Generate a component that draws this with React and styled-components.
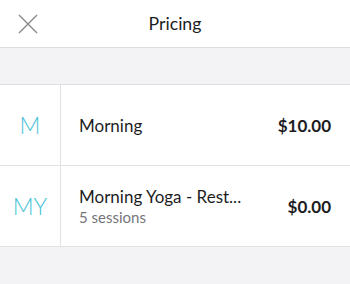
import styled, { createGlobalStyle } from 'styled-components';

const GlobalStyle = createGlobalStyle`
  html, body {
    margin: 0;
    padding: 0;
    background: #f3f3f5;
    font-family: Lato, "Open Sans", sans-serif;
  }
`

const Page = styled.div`
  width: 350px;
  height: 284px;
  background: #f3f3f5;
  display: flex;
  flex-direction: column;
`

const Header = styled.div`
  height: 47px;
  background: #fff;
  border-bottom: 1px solid #dedee2;
  display: grid;
  grid-template-columns: 56px 1fr 56px;
  align-items: center;
`

const CloseButton = styled.div`
  display: flex;
  align-items: center;
  justify-content: center;
`

const Title = styled.h1`
  margin: 0;
  text-align: center;
  font-size: 17.7px;
  font-weight: 400;
  color: #1d1d1f;
`

const Spacer = styled.div`
  height: 36px;
  border-bottom: 1px solid #dedee2;
`

const List = styled.div`
  background: #fff;
`

const Row = styled.div`
  display: grid;
  grid-template-columns: 61px 1fr auto;
  height: 80px;
  border-bottom: 1px solid #e2e2e5;
`

const Initials = styled.div`
  display: flex;
  align-items: center;
  justify-content: center;
  border-right: 1px solid #e2e2e5;
  color: #4bc3d8;
  font-size: 23px;
  font-weight: 300;
`

const Info = styled.div`
  display: flex;
  flex-direction: column;
  justify-content: center;
  padding-left: 18px;
  min-width: 0;
`

const Name = styled.div`
  font-size: 17px;
  color: #1d1d1f;
  white-space: nowrap;
`

const Sessions = styled.div`
  font-size: 15px;
  color: #75757a;
  margin-top: 1px;
`

const Price = styled.div`
  display: flex;
  align-items: center;
  padding: 0 19px 0 16px;
  font-size: 17px;
  font-weight: 700;
  color: #1d1d1f;
`

const plans = [
  { initials: 'M', name: 'Morning', price: '$10.00' },
  { initials: 'MY', name: 'Morning Yoga - Rest...', sessions: '5 sessions', price: '$0.00' },
]

const App = () => {
  return (
    <Page>
      <GlobalStyle />
      <Header>
        <CloseButton>
          <svg width="20" height="20" viewBox="0 0 20 20">
            <path d="M1 1 L19 19 M19 1 L1 19" stroke="#8a8a8e" strokeWidth="1.4" fill="none" />
          </svg>
        </CloseButton>
        <Title>Pricing</Title>
        <div />
      </Header>
      <Spacer />
      <List>
        {plans.map((plan) => (
          <Row key={plan.name}>
            <Initials>{plan.initials}</Initials>
            <Info>
              <Name>{plan.name}</Name>
              {plan.sessions && <Sessions>{plan.sessions}</Sessions>}
            </Info>
            <Price>{plan.price}</Price>
          </Row>
        ))}
      </List>
    </Page>
  )
}

export default App
